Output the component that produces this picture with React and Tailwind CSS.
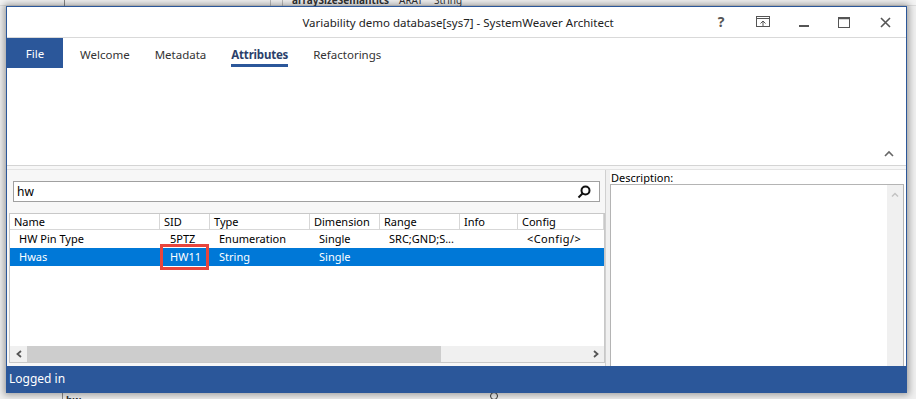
import React from "react";

const columns = [
  { label: "Name", w: "w-[150px]" },
  { label: "SID", w: "w-[50px]" },
  { label: "Type", w: "w-[100px]" },
  { label: "Dimension", w: "w-[70px]" },
  { label: "Range", w: "w-[80px]" },
  { label: "Info", w: "w-[58px]" },
  { label: "Config", w: "w-[86px]" },
];

const rows = [
  { name: "HW Pin Type", sid: "5PTZ", type: "Enumeration", dim: "Single", range: "SRC;GND;S...", info: "", config: "<Config/>" },
  { name: "Hwas", sid: "HW11", type: "String", dim: "Single", range: "", info: "", config: "", selected: true },
];

function TitleButtons() {
  return (
    <div className="flex items-center justify-end h-full text-[#555]">
      <div className="w-[42px] flex justify-center text-[14px] font-bold leading-none">?</div>
      <div className="w-[42px] flex justify-center">
        <svg width="14" height="12" viewBox="0 0 14 12" fill="none" stroke="#555" strokeWidth="1">
          <rect x="0.5" y="0.5" width="13" height="10" />
          <line x1="0.5" y1="2.5" x2="13.5" y2="2.5" />
          <path d="M4.5 7.5 L7 5 L9.5 7.5 M7 5 V10" />
        </svg>
      </div>
      <div className="w-[40px] flex justify-center pt-[8px]">
        <div className="w-[10px] h-[2px] bg-[#555]" />
      </div>
      <div className="w-[40px] flex justify-center">
        <svg width="12" height="11" viewBox="0 0 12 11" fill="none" stroke="#555">
          <rect x="0.5" y="0.5" width="11" height="10" />
          <line x1="0.5" y1="1.5" x2="11.5" y2="1.5" strokeWidth="1.5" />
        </svg>
      </div>
      <div className="w-[42px] flex justify-center">
        <svg width="11" height="11" viewBox="0 0 11 11" stroke="#555" strokeWidth="1.6">
          <path d="M1 1 L10 10 M10 1 L1 10" />
        </svg>
      </div>
    </div>
  );
}

function Window() {
  return (
    <div className="absolute left-[6px] top-[6px] w-[901px] h-[387px] border border-[#2b579a] bg-white flex flex-col shadow-[0_0_7px_2px_rgba(0,0,0,0.35)]">
      {/* title bar */}
      <div className="h-[31px] shrink-0 grid grid-cols-[1fr_auto_1fr] items-center border-b border-[#d9d9d9]">
        <div />
        <div className="text-[11.5px] text-[#222] pl-[3px] pt-[1px]">Variability demo database[sys7] - SystemWeaver Architect</div>
        <TitleButtons />
      </div>

      {/* ribbon tabs */}
      <div className="h-[30px] shrink-0 flex items-stretch text-[11.5px] text-[#333]">
        <div className="w-[56px] bg-[#2b579a] text-white flex items-center justify-center pt-[2px]">File</div>
        <div className="flex items-center pl-[17px] gap-[25px] pt-[3px]">
          <span>Welcome</span>
          <span>Metadata</span>
          <span className="relative font-bold text-[#2b3f6b] tracking-[-0.2px]">
            Attributes
            <span className="absolute left-0 right-0 top-[18px] h-[3px] bg-[#2b579a]" />
          </span>
          <span>Refactorings</span>
        </div>
      </div>

      {/* ribbon body */}
      <div className="h-[97px] shrink-0 flex items-end justify-end pr-[12px] pb-[8px]">
        <svg width="10" height="7" viewBox="0 0 10 7" fill="none" stroke="#666" strokeWidth="1.6">
          <path d="M1 6 L5 2 L9 6" />
        </svg>
      </div>
      <div className="h-[1px] shrink-0 bg-[#d4d4d4]" />
      <div className="h-[4px] shrink-0 bg-[#f7f7f7] border-b border-[#e3e3e3]" />

      {/* main */}
      <div className="flex-1 flex min-h-0 bg-[#f7f7f7]">
        {/* left */}
        <div className="w-[598px] flex flex-col">
          <div className="pt-[11px] pl-[6px] pr-[5px]">
            <div className="h-[21px] border border-[#a0a0a0] bg-white flex items-center justify-between pl-[3px] pr-[8px]">
              <span className="text-[12px] text-black">hw</span>
              <svg width="14" height="14" viewBox="0 0 14 14" fill="none" stroke="#111" strokeWidth="2">
                <circle cx="8.5" cy="5.5" r="4" />
                <path d="M5.5 8.5 L1.5 12.5" />
              </svg>
            </div>
          </div>
          <div className="mt-[11px] ml-[2px] flex-1 mb-[3px] border border-[#c8c8c8] bg-white flex flex-col min-h-0">
            <div className="h-[16px] shrink-0 flex border-b border-[#d7d7d7] text-[11px] text-black">
              {columns.map((c) => (
                <div key={c.label} className={`${c.w} shrink-0 border-r border-[#d7d7d7] pl-[4px] leading-[15px]`}>
                  {c.label}
                </div>
              ))}
            </div>
            {rows.map((r) => (
              <div
                key={r.name}
                className={`h-[18px] shrink-0 flex text-[11px] leading-[18px] ${r.selected ? "bg-[#0078d7] text-white" : "text-black"}`}
              >
                <div className="w-[150px] shrink-0 pl-[9px]">{r.name}</div>
                <div className="w-[50px] shrink-0 pl-[10px] relative">
                  {r.selected && (
                    <span className="absolute left-[0px] top-[-4px] w-[49px] h-[26px] border-[3px] border-[#e8453c]" />
                  )}
                  {r.sid}
                </div>
                <div className="w-[100px] shrink-0 pl-[9px]">{r.type}</div>
                <div className="w-[70px] shrink-0 pl-[9px]">{r.dim}</div>
                <div className="w-[80px] shrink-0 pl-[9px]">{r.range}</div>
                <div className="w-[58px] shrink-0 pl-[9px]">{r.info}</div>
                <div className="w-[86px] shrink-0 pl-[9px] tracking-[0.4px]">{r.config}</div>
              </div>
            ))}
            <div className="flex-1" />
            {/* horizontal scrollbar */}
            <div className="h-[16px] shrink-0 flex items-center bg-[#f0f0f0]">
              <div className="w-[17px] flex justify-center">
                <svg width="6" height="8" viewBox="0 0 6 8" fill="none" stroke="#555" strokeWidth="1.8">
                  <path d="M5 1 L1.5 4 L5 7" />
                </svg>
              </div>
              <div className="w-[414px] h-full bg-[#cdcdcd]" />
              <div className="flex-1" />
              <div className="w-[17px] flex justify-center">
                <svg width="6" height="8" viewBox="0 0 6 8" fill="none" stroke="#555" strokeWidth="1.8">
                  <path d="M1 1 L4.5 4 L1 7" />
                </svg>
              </div>
            </div>
          </div>
        </div>

        {/* splitter */}
        <div className="w-[5px] bg-[#f0f0f0] border-l border-[#d0d0d0]" />

        {/* right */}
        <div className="flex-1 flex flex-col bg-white">
          <div className="h-[14px] text-[11px] text-black pl-[1px] leading-[16px] bg-white">Description:</div>
          <div className="flex-1 mr-[2px] border-t border-l border-r border-[#b4b4b4] flex bg-white">
            <div className="flex-1" />
            <div className="w-[16px] bg-[#f0f0f0] flex justify-center pt-[7px]">
              <svg width="8" height="5" viewBox="0 0 8 5" fill="none" stroke="#c3c3c3" strokeWidth="1.5">
                <path d="M1 4.5 L4 1.5 L7 4.5" />
              </svg>
            </div>
          </div>
        </div>
      </div>

      {/* status bar */}
      <div className="h-[26px] shrink-0 bg-[#2b579a] text-white text-[12px] flex items-center pl-[2px]">Logged in</div>
    </div>
  );
}

export default function App() {
  return (
    <div
      className="relative w-[916px] h-[399px] overflow-hidden bg-[#f0f0f0]"
      style={{ fontFamily: '"Noto Sans", "Open Sans", sans-serif' }}
    >
      {/* desktop content behind the window */}
      <div className="absolute left-0 top-0 w-[916px] h-[6px] bg-[#f4f4f4] border-b border-[#dcdcdc]" />
      <div className="absolute left-[64px] top-0 w-[1px] h-[6px] bg-[#888]" />
      <div className="absolute left-[270px] top-0 w-[1px] h-[6px] bg-[#bbb]" />
      <div className="absolute left-[282px] top-0 w-[1px] h-[6px] bg-[#bbb]" />
      <div className="absolute left-[292px] top-[-7px] text-[10px] text-[#333] font-bold">arraySizeSemantics</div>
      <div className="absolute left-[399px] top-[-7px] text-[10px] text-[#333]">ARAT</div>
      <div className="absolute left-[434px] top-[-7px] text-[10px] text-[#333]">String</div>
      <div className="absolute left-[62px] top-[392px] w-[1px] h-[7px] bg-[#888]" />
      <div className="absolute left-[66px] top-[393px] text-[10px] text-[#333] font-bold">hw</div>
      <div className="absolute left-[490px] top-[392px] w-[8px] h-[8px] rounded-full border border-[#333]" />
      <Window />
    </div>
  );
}
